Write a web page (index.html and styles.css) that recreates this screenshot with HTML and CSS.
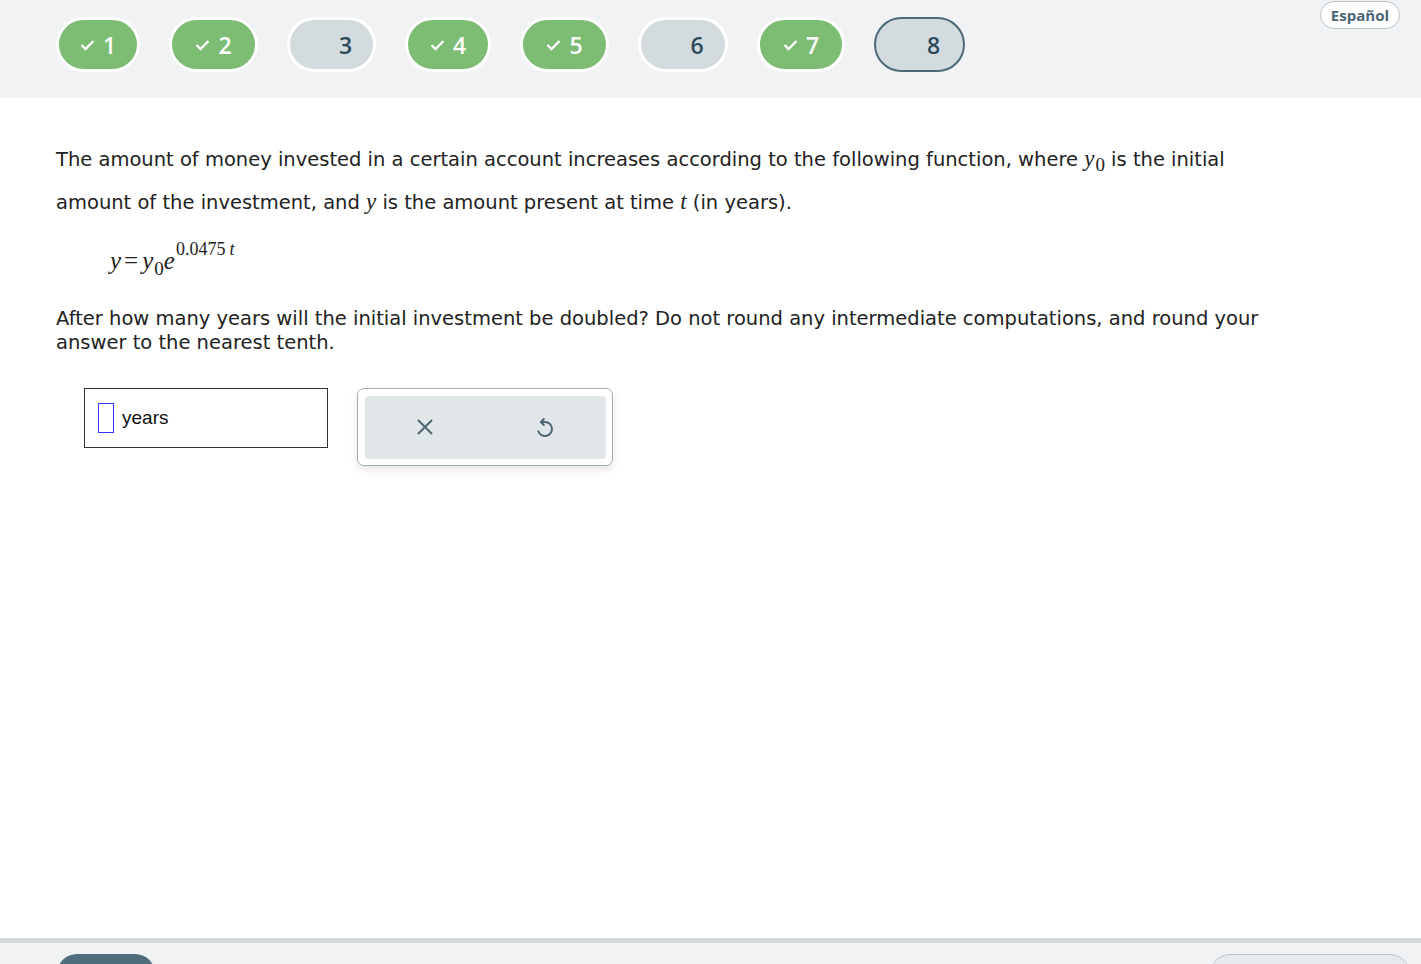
FILE: index.html
```html
<!DOCTYPE html>
<html lang="en">
<head>
    <meta charset="UTF-8">
    <title>Question 8</title>
    <link rel="stylesheet" href="styles.css">
</head>
<body>

    <!-- top navigation -->
    <div class="top-bar">
        <div class="pills">
            <div class="pill done w84"><svg class="chk" width="15" height="12" viewBox="0 0 15 12"><path d="M1.5 6 L5.5 10 L13.5 2" stroke="#fff" stroke-width="2.4" fill="none"/></svg>1</div>
            <div class="pill done w89"><svg class="chk" width="15" height="12" viewBox="0 0 15 12"><path d="M1.5 6 L5.5 10 L13.5 2" stroke="#fff" stroke-width="2.4" fill="none"/></svg>2</div>
            <div class="pill todo w89">3</div>
            <div class="pill done w86"><svg class="chk" width="15" height="12" viewBox="0 0 15 12"><path d="M1.5 6 L5.5 10 L13.5 2" stroke="#fff" stroke-width="2.4" fill="none"/></svg>4</div>
            <div class="pill done w89"><svg class="chk" width="15" height="12" viewBox="0 0 15 12"><path d="M1.5 6 L5.5 10 L13.5 2" stroke="#fff" stroke-width="2.4" fill="none"/></svg>5</div>
            <div class="pill todo w90">6</div>
            <div class="pill done w88"><svg class="chk" width="15" height="12" viewBox="0 0 15 12"><path d="M1.5 6 L5.5 10 L13.5 2" stroke="#fff" stroke-width="2.4" fill="none"/></svg>7</div>
            <div class="pill current w91">8</div>
        </div>
        <button class="lang-btn">Español</button>
    </div>

    <!-- question -->
    <div class="main">
        <p class="intro">The amount of money invested in a certain account increases according to the following function, where <span class="m">y<sub>0</sub></span> is the initial amount of the investment, and <span class="m">y</span> is the amount present at time <span class="m">t</span> (in years).</p>

        <div class="formula"><span class="mi">y</span><span class="eq">=</span><span class="mi">y</span><sub>0</sub><span class="mi">e</span><sup>0.0475<span class="mi st">t</span></sup></div>

        <p class="ask">After how many years will the initial investment be doubled? Do not round any intermediate computations, and round your answer to the nearest tenth.</p>

        <div class="answer-row">
            <div class="answer-box">
                <span class="cursor"></span>
                <span class="unit">years</span>
            </div>
            <div class="tools">
                <div class="tools-inner">
                    <button class="tool-btn">
                        <svg width="20" height="20" viewBox="0 0 20 20"><path d="M3 3 L17 17 M17 3 L3 17" stroke="#4f6673" stroke-width="2" fill="none"/></svg>
                    </button>
                    <button class="tool-btn">
                        <svg width="24" height="24" viewBox="0 0 24 24"><path d="M8 7 L12 7 A7 7 0 1 1 5.3 16.2" stroke="#4f6673" stroke-width="2" fill="none" stroke-linecap="round"/><path d="M10.8 4 L8 7 L10.8 10" stroke="#4f6673" stroke-width="2" fill="none" stroke-linecap="round" stroke-linejoin="round"/></svg>
                    </button>
                </div>
            </div>
        </div>
    </div>

    <!-- bottom bar -->
    <div class="bottom-bar">
        <button class="explain-btn"></button>
        <button class="check-btn"></button>
    </div>

</body>
</html>
```

FILE: styles.css
```css
html, body {
    margin: 0;
    padding: 0;
    height: 100%;
}

body {
    font-family: 'DejaVu Sans', Verdana, sans-serif;
    color: #222;
    background-color: #fff;
    display: flex;
    flex-direction: column;
    overflow: hidden;
}

/* top bar */
.top-bar {
    height: 98px;
    background-color: #f1f2f4;
    display: flex;
    align-items: flex-start;
    justify-content: space-between;
    flex-shrink: 0;
}

.pills {
    display: flex;
    gap: 29px;
    padding: 17px 0 0 56px;
}

.pill {
    box-sizing: border-box;
    height: 55px;
    border-radius: 28px;
    border: 3px solid #fff;
    display: flex;
    align-items: center;
    justify-content: center;
    font-family: 'Open Sans', 'Liberation Sans', sans-serif;
    font-size: 23px;
    font-weight: 600;
}

.w84 { width: 84px; }
.w86 { width: 86px; }
.w88 { width: 88px; }
.w89 { width: 89px; }
.w90 { width: 90px; }
.w91 { width: 91px; }

.pill.done {
    background-color: #7dbd73;
    color: #fff;
}

.pill.todo {
    background-color: #d4dbdf;
    color: #2e4b5b;
    padding-left: 28px;
}

.pill.current {
    background-color: #d4dbdf;
    color: #2e4b5b;
    border: 2px solid #4e6a79;
    padding-left: 28px;
}

.chk {
    margin-right: 8px;
}

.lang-btn {
    margin: 1px 21px 0 0;
    height: 28px;
    padding: 0 10px;
    border-radius: 14px;
    border: 1px solid #b8c4cb;
    background-color: #fff;
    color: #4a6676;
    font-family: 'Open Sans', 'Liberation Sans', sans-serif;
    font-weight: 700;
    font-size: 15px;
}

/* question area */
.main {
    flex: 1;
    padding: 40px 0 0 56px;
    font-size: 19.5px;
}

.intro {
    margin: 0;
    line-height: 42px;
    width: 1215px;
}

.m {
    font-family: 'Liberation Serif', 'Times New Roman', serif;
    font-style: italic;
    font-size: 23px;
}

.m sub {
    font-style: normal;
    font-size: 19px;
    vertical-align: -5px;
    line-height: 0;
    margin-left: 1px;
}

.formula {
    font-family: 'Liberation Serif', 'Times New Roman', serif;
    font-size: 25px;
    margin: 17px 0 0 54px;
    height: 44px;
    padding-top: 6px;
}

.formula .mi {
    font-style: italic;
}

.formula .eq {
    padding: 0 4px 0 3px;
}

.formula sub {
    font-size: 19px;
    vertical-align: -6px;
    line-height: 0;
    margin-left: 1px;
}

.formula sup {
    font-size: 18px;
    vertical-align: 14px;
    line-height: 0;
    margin-left: 1px;
}

.formula .st {
    margin-left: 4px;
}

.ask {
    margin: 16px 0 0;
    line-height: 24px;
    width: 1215px;
}

.answer-row {
    display: flex;
    align-items: flex-start;
    gap: 29px;
    margin: 33px 0 0 28px;
}

.answer-box {
    box-sizing: border-box;
    width: 244px;
    height: 60px;
    border: 1.5px solid #333;
    display: flex;
    align-items: center;
    padding-left: 13px;
}

.cursor {
    width: 14px;
    height: 28px;
    border: 1.5px solid #3434ff;
    margin-right: 8px;
}

.unit {
    font-family: 'Liberation Sans', Arial, sans-serif;
    font-size: 19px;
    color: #111;
}

.tools {
    box-sizing: border-box;
    width: 256px;
    height: 78px;
    border: 1.5px solid #9fb0ba;
    border-radius: 7px;
    padding: 6.5px;
    box-shadow: 0 4px 8px rgba(0, 0, 0, 0.1);
    background-color: #fff;
}

.tools-inner {
    display: flex;
    height: 100%;
    background-color: #e1e6e9;
    border-radius: 4px;
}

.tool-btn {
    flex: 1;
    border: none;
    background: transparent;
    display: flex;
    align-items: center;
    justify-content: center;
    padding: 0;
}

/* bottom bar */
.bottom-bar {
    height: 21px;
    border-top: 5px solid #d3d9dd;
    background-color: #f1f2f4;
    display: flex;
    justify-content: space-between;
    align-items: flex-start;
    overflow: hidden;
    flex-shrink: 0;
}

.explain-btn {
    margin: 11px 0 0 57px;
    width: 98px;
    height: 40px;
    border: none;
    border-radius: 20px;
    background-color: #4f6d7a;
}

.check-btn {
    margin: 11px 11px 0 0;
    width: 200px;
    height: 40px;
    border: 1.5px solid #b9c5cc;
    border-radius: 20px;
    background-color: #e6eaed;
}
```
